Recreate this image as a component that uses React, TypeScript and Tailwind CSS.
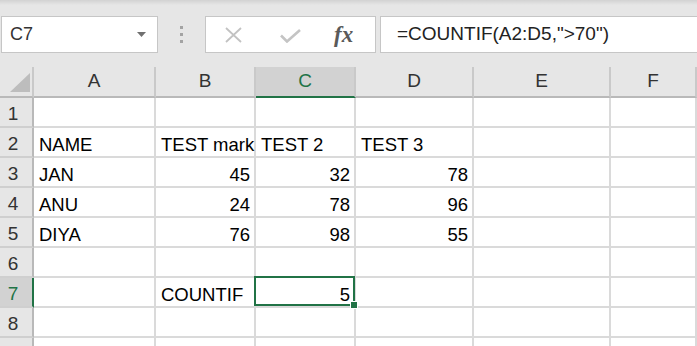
import React from 'react';

type Cell = string | number;

const COLUMNS = ['A', 'B', 'C', 'D', 'E', 'F'];

const ROWS: Cell[][] = [
  ['', '', '', '', '', ''],
  ['NAME', 'TEST mark', 'TEST 2', 'TEST 3', '', ''],
  ['JAN', 45, 32, 78, '', ''],
  ['ANU', 24, 78, 96, '', ''],
  ['DIYA', 76, 98, 55, '', ''],
  ['', '', '', '', '', ''],
  ['', 'COUNTIF', 5, '', '', ''],
  ['', '', '', '', '', ''],
  ['', '', '', '', '', ''],
];

const SELECTED_ROW = 7;
const SELECTED_COL = 2;
// row 9 only peeks in at the bottom edge, its number is below the fold
const LAST_NUMBERED_ROW = 8;

function Toolbar() {
  return (
    <div className="h-[67px] bg-[#e6e6e6] flex flex-col">
      <div className="h-[5px] bg-gradient-to-b from-[#d2d2d2] to-[#e6e6e6]" />
      <div className="flex items-center mt-[11px] h-[37px]">
        {/* name box */}
        <div className="ml-[1px] w-[157px] h-full bg-white border border-[#c6c6c6] flex items-center justify-between pl-[8px] pr-[11px]">
          <span className="text-[18px] text-[#333]">C7</span>
          <svg width="9" height="5" viewBox="0 0 9 5">
            <path d="M0 0h9L4.5 5z" fill="#707070" />
          </svg>
        </div>
        {/* grip dots */}
        <div className="w-[47px] flex flex-col items-center gap-[4px]">
          <div className="w-[3px] h-[3px] bg-[#a3a3a3]" />
          <div className="w-[3px] h-[3px] bg-[#a3a3a3]" />
          <div className="w-[3px] h-[3px] bg-[#a3a3a3]" />
        </div>
        {/* cancel / enter / fx */}
        <div className="w-[171px] h-full bg-white border border-[#c6c6c6] flex items-center">
          <svg className="ml-[19px]" width="17" height="16" viewBox="0 0 17 16">
            <path d="M1 1l15 14M16 1L1 15" stroke="#c2c2c2" strokeWidth="1.8" fill="none" />
          </svg>
          <svg className="ml-[38px] mt-[3px]" width="21" height="14" viewBox="0 0 21 14">
            <path d="M1 6.5l6 6L20 1" stroke="#c4c4c4" strokeWidth="2.6" fill="none" />
          </svg>
          <span className="ml-[33px] font-['Liberation_Serif',serif] italic font-bold text-[23px] text-[#5a5a5a] leading-none">
            fx
          </span>
        </div>
        {/* formula bar */}
        <div className="ml-[4px] flex-1 h-full bg-white border border-r-0 border-[#c6c6c6] flex items-center pl-[16px]">
          <span className="text-[19px] text-[#222] whitespace-nowrap">=COUNTIF(A2:D5,"&gt;70")</span>
        </div>
      </div>
    </div>
  );
}

function HeaderRow() {
  return (
    <>
      <div className="h-[31px] bg-[#e6e6e6] border-r-2 border-b-2 border-r-[#c9c9c9] border-b-[#b9b9b9] relative">
        <svg className="absolute left-[10px] top-[6px]" width="20" height="19" viewBox="0 0 20 19">
          <path d="M20 0v19H0z" fill="#bdbdbd" />
        </svg>
      </div>
      {COLUMNS.map((col, i) => {
        const active = i === SELECTED_COL;
        return (
          <div
            key={col}
            className={
              active
                ? 'h-[31px] bg-[#d2d2d2] border-r-2 border-b-2 border-r-[#c9c9c9] border-b-[#217346] flex items-center justify-center text-[19px] text-[#217346]'
                : 'h-[31px] bg-[#e6e6e6] border-r-2 border-b-2 border-r-[#c9c9c9] border-b-[#b9b9b9] flex items-center justify-center text-[19px] text-[#333]'
            }
          >
            {col}
          </div>
        );
      })}
    </>
  );
}

export default function App() {
  return (
    <div className="w-[697px] h-[346px] overflow-hidden bg-white font-['Liberation_Sans',Arial,sans-serif]">
      <Toolbar />
      <div className="grid grid-cols-[34px_122px_100px_100px_118px_137px_1fr]">
        <HeaderRow />
        {ROWS.map((row, r) => {
          const rowNum = r + 1;
          const activeRow = rowNum === SELECTED_ROW;
          return (
            <React.Fragment key={rowNum}>
              <div
                className={
                  activeRow
                    ? 'h-[30px] bg-[#d2d2d2] border-r-2 border-b-2 border-r-[#217346] border-b-[#cfcfcf] text-center pr-[6px] pt-[5px] leading-[22px] text-[19px] text-[#217346]'
                    : 'h-[30px] bg-[#e6e6e6] border-r-2 border-b-2 border-r-[#b9b9b9] border-b-[#cfcfcf] text-center pr-[6px] pt-[5px] leading-[22px] text-[19px] text-[#333]'
                }
              >
                {rowNum <= LAST_NUMBERED_ROW ? rowNum : ''}
              </div>
              {row.map((value, c) => {
                const isNum = typeof value === 'number';
                const selected = activeRow && c === SELECTED_COL;
                return (
                  <div
                    key={c}
                    className={
                      'relative h-[30px] border-r-2 border-b-2 border-[#dadada] pt-[6px] leading-[22px] text-[18.5px] text-black whitespace-nowrap ' +
                      (isNum ? 'text-right pr-[4px]' : 'text-left pl-[5px]')
                    }
                  >
                    {value}
                    {selected && (
                      <div className="absolute -left-[2px] -top-[2px] -right-[1px] bottom-0 border-2 border-[#217346] z-10">
                        <div className="absolute -right-[5px] -bottom-[5px] w-[8px] h-[8px] bg-[#217346] border border-white" />
                      </div>
                    )}
                  </div>
                );
              })}
            </React.Fragment>
          );
        })}
      </div>
    </div>
  );
}
